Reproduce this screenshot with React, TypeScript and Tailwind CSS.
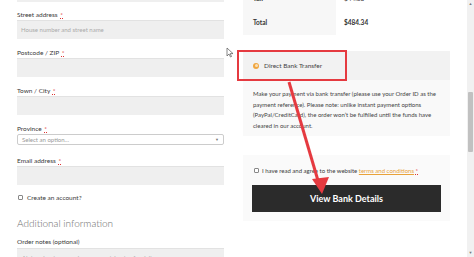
import React from "react";

const font = { fontFamily: "Lato, 'Noto Sans', sans-serif" };

function Label({ text, req = true }: { text: string; req?: boolean }) {
  return (
    <div className="h-[11px] text-[6.5px] leading-[11px] text-[#3a3a3a]">
      {text}
      {req && <span className="text-[#d33] underline decoration-dotted ml-[1px]">*</span>}
    </div>
  );
}

function Input({ placeholder = "" }: { placeholder?: string }) {
  return (
    <div className="h-[19px] bg-[#efefef] border-t border-[#e2e2e2] pl-[4px] text-[6px] leading-[18px] text-[#aaa]">
      {placeholder}
    </div>
  );
}

export default function App() {
  return (
    <div className="relative w-[474px] h-[257px] overflow-hidden bg-white flex" style={font}>
      <div className="flex-1 flex pl-[17px] gap-[19px]">
        {/* left column */}
        <div className="w-[207px] flex flex-col -mt-[17px]">
          <div className="mb-[7px]"><Input /></div>
          <Label text="Street address " />
          <div className="mb-[8px]"><Input placeholder="House number and street name" /></div>
          <Label text="Postcode / ZIP " />
          <div className="mb-[8px]"><Input /></div>
          <Label text="Town / City " />
          <div className="mb-[8px]"><Input /></div>
          <Label text="Province " />
          <div className="h-[13px] border border-[#ccc] rounded-[2px] flex items-center justify-between px-[4px] text-[6px] text-[#999] mb-[10px]">
            <span>Select an option…</span>
            <span className="text-[4px] text-[#777]">▼</span>
          </div>
          <Label text="Email address " />
          <div className="mb-[8px]"><Input /></div>
          <div className="flex items-center gap-[4px] h-[12px] pl-[1px] text-[6.5px] text-[#3a3a3a]">
            <span className="w-[5px] h-[5px] border border-[#888] rounded-[1px] bg-white" />
            <span>Create an account?</span>
          </div>
          <div className="mt-[10px] h-[20px] text-[10px] leading-[20px] font-light text-[#6a6a6a]">Additional information</div>
          <div className="mt-[3px]"><Label text="Order notes (optional)" req={false} /></div>
          <div className="mt-[1px] h-[30px] bg-[#efefef] border-t border-[#e2e2e2] pl-[6px] text-[6px] leading-[18px] text-[#aaa]">
            Notes about your order, e.g. special notes for delivery.
          </div>
        </div>

        {/* right column */}
        <div className="w-[207px] flex flex-col -mt-[13px]">
          <div className="flex flex-col text-[6.5px] text-[#333]">
            <div className="flex h-[24px]">
              <div className="w-[93px] bg-[#f7f7f7] pl-[10px] flex items-center font-bold">Tax</div>
              <div className="pl-[8px] flex items-center">$44.03</div>
            </div>
            <div className="flex h-[24px]">
              <div className="w-[93px] bg-[#f7f7f7] pl-[10px] flex items-center font-bold">Total</div>
              <div className="pl-[8px] flex items-center font-bold">$484.34</div>
            </div>
          </div>

          <div className="mt-[16px] flex flex-col">
            <div className="h-[29px] bg-[#f2f2f2] flex items-center pl-[10px] gap-[5px] text-[6.5px] text-[#444]">
              <span className="w-[6px] h-[6px] rounded-full bg-[#f0a640] flex items-center justify-center">
                <span className="w-[3px] h-[3px] rounded-full bg-[#fbe1b8]" />
              </span>
              <span>Direct Bank Transfer</span>
            </div>
            <div className="bg-[#f9f9f9] pt-[9px] pb-[5px] pl-[10px] pr-[6px] text-[6px] leading-[10.6px] text-[#444]">
              Make your payment via bank transfer (please use your Order ID as the payment reference). Please note: unlike instant payment options (PayPal/CreditCard), the order won’t be fulfilled until the funds have cleared in our account.
            </div>
          </div>

          <div className="mt-[19px] bg-[#fafafa] px-[9px] pt-[10px] pb-[9px] flex flex-col">
            <div className="flex items-center gap-[3px] h-[10px] pl-[2px] text-[6px] text-[#3a3a3a]">
              <span className="w-[5px] h-[5px] border border-[#888] rounded-[1px] bg-white" />
              <span>
                I have read and agree to the website{" "}
                <span className="text-[#e8a23a] underline">terms and conditions</span>{" "}
                <span className="text-[#d33] underline decoration-dotted">*</span>
              </span>
            </div>
            <div className="mt-[10px] h-[27px] bg-[#2b2b2b] flex items-center justify-center text-white font-bold text-[9px]">
              View Bank Details
            </div>
          </div>
        </div>
      </div>

      {/* scrollbar */}
      <div className="w-[7px] h-full bg-[#f1f1f1] flex flex-col items-center justify-between py-[2px]">
        <span className="text-[4px] leading-[4px] text-[#777]">▲</span>
        <span className="text-[4px] leading-[4px] text-[#777]">▼</span>
      </div>
      <div className="absolute left-[468px] top-[92px] w-[5px] h-[60px] bg-[#c1c1c1] rounded-[1px]" />

      {/* red highlight box */}
      <div className="absolute left-[237px] top-[50px] w-[110px] h-[31px] border-[2px] border-[#e53a40]" />

      {/* cursor */}
      <svg className="absolute left-[226px] top-[47px]" width="8" height="11" viewBox="0 0 8 11">
        <path d="M1 1 L1 9 L3 7 L4.5 10 L5.5 9.5 L4.2 6.6 L7 6.6 Z" fill="white" stroke="#555" strokeWidth="0.7" />
      </svg>

      {/* red arrow */}
      <svg className="absolute left-0 top-0" width="474" height="257" viewBox="0 0 474 257">
        <line x1="289" y1="82" x2="319" y2="184" stroke="#e53a40" strokeWidth="3" />
        <polygon points="312,179 329,177 322,194" fill="#e53a40" />
      </svg>
    </div>
  );
}
